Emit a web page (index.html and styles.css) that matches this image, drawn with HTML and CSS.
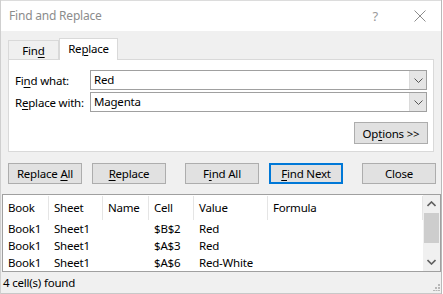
FILE: index.html
```html
<!DOCTYPE html>
<html>
<head>
<meta charset="utf-8">
<link rel="stylesheet" href="styles.css">
</head>
<body>
<div class="window">
  <div class="titlebar">
    <span class="title">Find and Replace</span>
    <span class="help">?</span>
    <svg class="close-x" width="12" height="12" viewBox="0 0 12 12"><path d="M0.5 0.5 L11.5 11.5 M11.5 0.5 L0.5 11.5" stroke="#8c8c8c" stroke-width="1" fill="none"/></svg>
  </div>
  <div class="body">
    <div class="tabs">
      <div class="tab"><span>Fin<u>d</u></span></div>
      <div class="tab active"><span>Re<u>p</u>lace</span></div>
    </div>
    <div class="panel">
      <div class="field">
        <label class="lbl">Fi<u>n</u>d what:</label>
        <div class="combo"><span class="combo-text">Red</span><span class="drop"><svg width="9" height="5" viewBox="0 0 9 5"><path d="M0.5 0.5 L4.5 4.5 L8.5 0.5" stroke="#555" fill="none"/></svg></span></div>
      </div>
      <div class="field">
        <label class="lbl">R<u>e</u>place with:</label>
        <div class="combo"><span class="combo-text">Magenta</span><span class="drop"><svg width="9" height="5" viewBox="0 0 9 5"><path d="M0.5 0.5 L4.5 4.5 L8.5 0.5" stroke="#555" fill="none"/></svg></span></div>
      </div>
      <div class="opts-row"><button class="btn opts"><span>Op<u>t</u>ions &gt;&gt;</span></button></div>
    </div>
    <div class="actions">
      <button class="btn"><span>Replace <u>A</u>ll</span></button>
      <button class="btn"><span><u>R</u>eplace</span></button>
      <button class="btn gap"><span>F<u>i</u>nd All</span></button>
      <button class="btn primary"><span><u>F</u>ind Next</span></button>
      <button class="btn gap"><span>Close</span></button>
    </div>
  </div>
  <div class="results">
    <div class="grid">
      <div class="row head">
        <span class="c c1">Book</span><span class="c c2">Sheet</span><span class="c c3">Name</span><span class="c c4">Cell</span><span class="c c5">Value</span><span class="c c6">Formula</span>
      </div>
      <div class="row">
        <span class="c c1">Book1</span><span class="c c2">Sheet1</span><span class="c c3"></span><span class="c c4">$B$2</span><span class="c c5">Red</span><span class="c c6"></span>
      </div>
      <div class="row">
        <span class="c c1">Book1</span><span class="c c2">Sheet1</span><span class="c c3"></span><span class="c c4">$A$3</span><span class="c c5">Red</span><span class="c c6"></span>
      </div>
      <div class="row">
        <span class="c c1">Book1</span><span class="c c2">Sheet1</span><span class="c c3"></span><span class="c c4">$A$6</span><span class="c c5">Red-White</span><span class="c c6"></span>
      </div>
    </div>
    <div class="scrollbar">
      <span class="arrow"><svg width="9" height="6" viewBox="0 0 9 6"><path d="M0.5 5 L4.5 1 L8.5 5" stroke="#606060" stroke-width="1.6" fill="none"/></svg></span>
      <span class="thumb"></span>
      <span class="track"></span>
      <span class="arrow"><svg width="9" height="6" viewBox="0 0 9 6"><path d="M0.5 1 L4.5 5 L8.5 1" stroke="#606060" stroke-width="1.6" fill="none"/></svg></span>
    </div>
  </div>
  <div class="status">
    <span>4 cell(s) found</span>
    <svg class="grip" width="7" height="7" viewBox="0 0 7 7"><g fill="#b8b8b8"><rect x="5" y="0" width="2" height="2"/><rect x="2" y="3" width="2" height="2"/><rect x="5" y="3" width="2" height="2"/><rect x="0" y="6" width="2" height="1"/><rect x="2.5" y="6" width="2" height="1"/><rect x="5" y="6" width="2" height="1"/></g></svg>
  </div>
</div>
</body>
</html>
```
FILE: styles.css
```css
* { box-sizing: border-box; }
html, body { margin: 0; padding: 0; background: #ffffff; }
body {
  font-family: "Noto Sans", "Open Sans", sans-serif;
  font-size: 11.5px;
  letter-spacing: -0.2px;
  color: #000;
}
u { text-decoration: underline; text-underline-offset: 2px; text-decoration-thickness: 1px; }
.window {
  width: 442px;
  height: 294px;
  display: flex;
  flex-direction: column;
  border-left: 1px solid #cfcfcf;
  border-right: 1px solid #b9b9b9;
  background: #f0f0f0;
}
.titlebar {
  height: 31px;
  flex: none;
  background: #fff;
  border-top: 1px solid #dcdcdc;
  display: flex;
  align-items: center;
  padding-left: 8px;
  color: #8c8c8c;
}
.title { flex: 1; font-size: 12px; padding-bottom: 1px; }
.help { font-size: 13px; margin-right: 36px; color: #9a9a9a; }
.close-x { margin-right: 15px; }
.body { padding: 7px 0 0 7px; }
.tabs { display: flex; align-items: flex-end; height: 21px; }
.tab {
  width: 51px;
  height: 19px;
  border: 1px solid #d9d9d9;
  border-bottom: none;
  display: flex;
  justify-content: center;
  align-items: center;
  padding-top: 1px;
}
.tab.active {
  width: 59px;
  height: 22px;
  background: #fff;
  margin-bottom: -1px;
  position: relative;
  z-index: 1;
  padding-top: 0;
  padding-bottom: 2px;
}
.panel {
  width: 426px;
  height: 93px;
  background: #fff;
  border: 1px solid #d9d9d9;
  padding: 10px 5px 0 6px;
  display: flex;
  flex-direction: column;
  gap: 2px;
}
.field { display: flex; align-items: center; height: 20px; }
.lbl { width: 75px; }
.combo {
  width: 337px;
  height: 20px;
  border: 1px solid #a0a0a0;
  display: flex;
  align-items: stretch;
}
.combo-text { flex: 1; padding-left: 3px; line-height: 18px; }
.drop {
  width: 17px;
  background: #e5e5e5;
  border-left: 1px solid #dadada;
  display: flex;
  align-items: center;
  justify-content: center;
}
.opts-row { display: flex; justify-content: flex-end; margin-top: 8px; }
.btn {
  font: inherit;
  letter-spacing: inherit;
  color: #000;
  width: 74px;
  height: 21px;
  background: #e1e1e1;
  border: 1px solid #adadad;
  padding: 0;
  display: flex;
  align-items: center;
  justify-content: center;
}
.btn.opts { height: 22px; }
.actions { display: flex; margin-top: 11px; gap: 10px; }
.actions .gap { margin-left: 9px; }
.btn.primary { border: 2px solid #0078d7; }
.results {
  margin: 10px 0 0 1px;
  width: 439px;
  height: 78px;
  background: #fff;
  border: 1px solid #a0a0a0;
  display: flex;
}
.grid { flex: 1; }
.row { display: flex; height: 17px; align-items: center; }
.row.head { height: 25px; align-items: stretch; padding-top: 1px; }
.c { padding-left: 5px; white-space: nowrap; }
.head .c { border-right: 1px solid #e5e5e5; display: flex; align-items: center; padding-bottom: 1px; }
.c1 { width: 46px; }
.c2 { width: 54px; }
.c3 { width: 46px; }
.c4 { width: 45px; }
.c5 { width: 74px; }
.c6 { flex: 1; }
.scrollbar {
  width: 17px;
  background: #f0f0f0;
  display: flex;
  flex-direction: column;
}
.arrow { height: 18px; display: flex; align-items: center; justify-content: center; }
.thumb { height: 30px; margin: 0 1px; background: #cdcdcd; }
.track { flex: 1; }
.status {
  flex: 1;
  display: flex;
  align-items: center;
  justify-content: space-between;
  padding-left: 2px;
  padding-right: 1px;
  border-bottom: 1px solid #c8c8c8;
}
.grip { align-self: flex-end; margin-bottom: 2px; }
```
